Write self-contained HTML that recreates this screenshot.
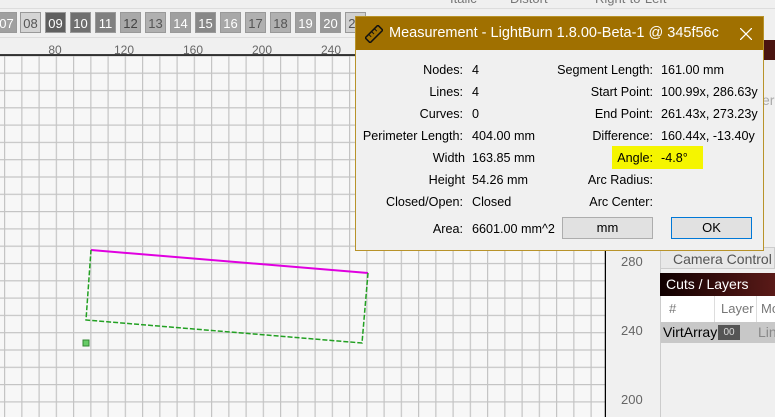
<!DOCTYPE html>
<html><head><meta charset="utf-8"><style>
body{margin:0;width:775px;height:417px;overflow:hidden;background:#f0f0f0;font-family:"Liberation Sans",sans-serif;position:relative}
.sw{position:absolute;top:12px;width:21px;height:21px;font-size:13px;line-height:21px;text-align:center;color:#fff;border:1px solid #999;box-sizing:border-box}
.dlg{position:absolute;left:355px;top:16px;width:409px;height:235px;background:#f0f0f0;border:1px solid #b8932a;box-sizing:border-box}
.tb{height:33px;background:#a07000;color:#fff;font-size:14.5px;line-height:33px;padding-left:33px;position:relative}
.l,.v{position:absolute;font-size:12.6px;color:#000;line-height:16px;white-space:nowrap}
.l{text-align:right}
.btn{position:absolute;height:22px;background:#e1e1e1;border:1px solid #adadad;box-sizing:border-box;font-size:13px;text-align:center;line-height:20px}
</style></head><body>
<div style="position:absolute;left:0;top:0;width:775px;height:8px;background:#f0f0f0;border-bottom:1px solid #ddd"></div>
<div style="position:absolute;left:0;top:37px;width:605px;height:1px;background:#ddd"></div>
<div class="sw" style="left:-4px;background:#a0a0a0">07</div>
<div class="sw" style="left:20px;background:#d4d4d4;color:#555">08</div>
<div class="sw" style="left:45px;background:#606060">09</div>
<div class="sw" style="left:70px;background:#707070">10</div>
<div class="sw" style="left:95px;background:#808080">11</div>
<div class="sw" style="left:120px;background:#a8a8a8;color:#444">12</div>
<div class="sw" style="left:145px;background:#b0b0b0;color:#555">13</div>
<div class="sw" style="left:170px;background:#a0a0a0">14</div>
<div class="sw" style="left:195px;background:#888">15</div>
<div class="sw" style="left:220px;background:#a8a8a8">16</div>
<div class="sw" style="left:245px;background:#b0b0b0;color:#555">17</div>
<div class="sw" style="left:270px;background:#b0b0b0;color:#555">18</div>
<div class="sw" style="left:295px;background:#a0a0a0">19</div>
<div class="sw" style="left:320px;background:#989898">20</div>
<div class="sw" style="left:345px;background:#d0d0d0;color:#555">21</div>
<svg style="position:absolute;left:0;top:38px" width="606" height="379">
<defs><pattern id="g" x="4" y="17.3" width="17.25" height="17.3" patternUnits="userSpaceOnUse">
<rect width="17.25" height="17.3" fill="#f7f7f7"/><rect x="0" y="0" width="1.2" height="17.3" fill="#c4c4c4"/><rect x="0" y="0" width="17.25" height="1.2" fill="#c4c4c4"/></pattern></defs>
<rect x="0" y="0" width="606" height="17" fill="#f0f0f0"/>
<rect x="0" y="17" width="605" height="362" fill="url(#g)"/>
<line x1="0" y1="17" x2="606" y2="17" stroke="#000" stroke-width="1.5"/>
<line x1="605.5" y1="17" x2="605.5" y2="379" stroke="#000" stroke-width="1.5"/>
<g font-size="12" fill="#666" text-anchor="middle" font-family="Liberation Sans"><text x="55" y="16">80</text><text x="124" y="16">120</text><text x="193" y="16">160</text><text x="262" y="16">200</text><text x="331" y="16">240</text></g>
<g transform="translate(0,-38)">
<line x1="91" y1="250" x2="368" y2="273" stroke="#e000e0" stroke-width="2"/>
<polyline points="368,273 362,343 86,320 91,250" fill="none" stroke="#22a022" stroke-width="1.5" stroke-dasharray="5,2"/>
<rect x="83" y="340" width="6" height="6" fill="#66cc66" stroke="#338833"/>
</g></svg>
<div style="position:absolute;left:606px;top:38px;width:54px;height:379px;background:#f0f0f0;font-size:13px;color:#666">
<div style="position:absolute;left:15px;top:216px">280</div><div style="position:absolute;left:15px;top:285px">240</div><div style="position:absolute;left:15px;top:354px">200</div></div>
<div style="position:absolute;left:660px;top:38px;width:115px;height:379px;background:#f0f0f0;border-left:1px solid #ccc"></div>
<div style="position:absolute;left:764px;top:40px;width:11px;height:20px;background:#4a1410"></div>
<div style="position:absolute;left:762px;top:92px;font-size:14px;color:#aaa">erl</div>
<div style="position:absolute;left:660px;top:247px;width:115px;height:22px;background:#e8e8e8;border:1px solid #ccc;font-size:14px;color:#555;line-height:22px;padding-left:12px;box-sizing:border-box">Camera Control</div>
<div style="position:absolute;left:660px;top:273px;width:115px;height:23px;background:linear-gradient(90deg,#100000,#5a1a18);color:#fff;font-size:14px;line-height:23px;padding-left:6px;box-sizing:border-box">Cuts / Layers</div>
<div style="position:absolute;left:661px;top:296px;width:114px;height:26px;background:#fff;font-size:13px;color:#777;line-height:26px"><span style="position:absolute;left:8px">#</span><span style="position:absolute;left:53px;border-left:1px solid #ddd;padding-left:6px">Layer</span><span style="position:absolute;left:95px;border-left:1px solid #ddd;padding-left:4px">Mo</span></div>
<div style="position:absolute;left:661px;top:322px;width:114px;height:21px;background:#c8c8c8;font-size:14px;line-height:21px"><span style="position:absolute;left:2px">VirtArray</span><span style="position:absolute;left:57px;top:3px;width:22px;height:15px;background:#555;color:#ddd;font-size:10px;line-height:15px;text-align:center">00</span><span style="position:absolute;left:97px;color:#888">Lin</span></div>
<div style="position:absolute;left:450px;top:-9px;font-size:13px;color:#777">Italic</div>
<div style="position:absolute;left:510px;top:-9px;font-size:13px;color:#777">Distort</div>
<div style="position:absolute;left:595px;top:-9px;font-size:13px;color:#777">Right-to-Left</div>
<div class="dlg">
<div class="tb">Measurement - LightBurn 1.8.00-Beta-1 @ 345f56c
<svg style="position:absolute;left:9px;top:8px" width="18" height="18"><g transform="rotate(-45 9 9)"><rect x="0" y="5.5" width="18" height="7" fill="none" stroke="#111" stroke-width="1.5"/><line x1="5" y1="6" x2="5" y2="9" stroke="#111"/><line x1="9" y1="6" x2="9" y2="9" stroke="#111"/><line x1="13" y1="6" x2="13" y2="9" stroke="#111"/></g></svg>
<svg style="position:absolute;left:384px;top:11px" width="12" height="12"><path d="M0 0L12 12M12 0L0 12" stroke="#fff" stroke-width="1.3"/></svg></div>
<div style="position:absolute;left:256px;top:129px;width:91px;height:23px;background:#f5f500"></div>
<div class="l" style="right:300px;top:45px">Nodes:</div><div class="v" style="left:116px;top:45px">4</div>
<div class="l" style="right:300px;top:67px">Lines:</div><div class="v" style="left:116px;top:67px">4</div>
<div class="l" style="right:300px;top:89px">Curves:</div><div class="v" style="left:116px;top:89px">0</div>
<div class="l" style="right:300px;top:111px">Perimeter Length:</div><div class="v" style="left:116px;top:111px">404.00 mm</div>
<div class="l" style="right:298px;top:133px">Width</div><div class="v" style="left:116px;top:133px">163.85 mm</div>
<div class="l" style="right:298px;top:155px">Height</div><div class="v" style="left:116px;top:155px">54.26 mm</div>
<div class="l" style="right:300px;top:177px">Closed/Open:</div><div class="v" style="left:116px;top:177px">Closed</div>
<div class="l" style="right:300px;top:204px">Area:</div><div class="v" style="left:116px;top:204px">6601.00 mm^2</div>
<div class="l" style="right:110px;top:45px">Segment Length:</div><div class="v" style="left:305px;top:45px">161.00 mm</div>
<div class="l" style="right:110px;top:67px">Start Point:</div><div class="v" style="left:305px;top:67px">100.99x, 286.63y</div>
<div class="l" style="right:110px;top:89px">End Point:</div><div class="v" style="left:305px;top:89px">261.43x, 273.23y</div>
<div class="l" style="right:110px;top:111px">Difference:</div><div class="v" style="left:305px;top:111px">160.44x, -13.40y</div>
<div class="l" style="right:110px;top:133px">Angle:</div><div class="v" style="left:305px;top:133px">-4.8°</div>
<div class="l" style="right:110px;top:155px">Arc Radius:</div>
<div class="l" style="right:110px;top:177px">Arc Center:</div>
<div class="btn" style="left:206px;top:200px;width:91px">mm</div>
<div class="btn" style="left:315px;top:200px;width:81px;border:1px solid #0078d7">OK</div>
</div>
</body></html>
